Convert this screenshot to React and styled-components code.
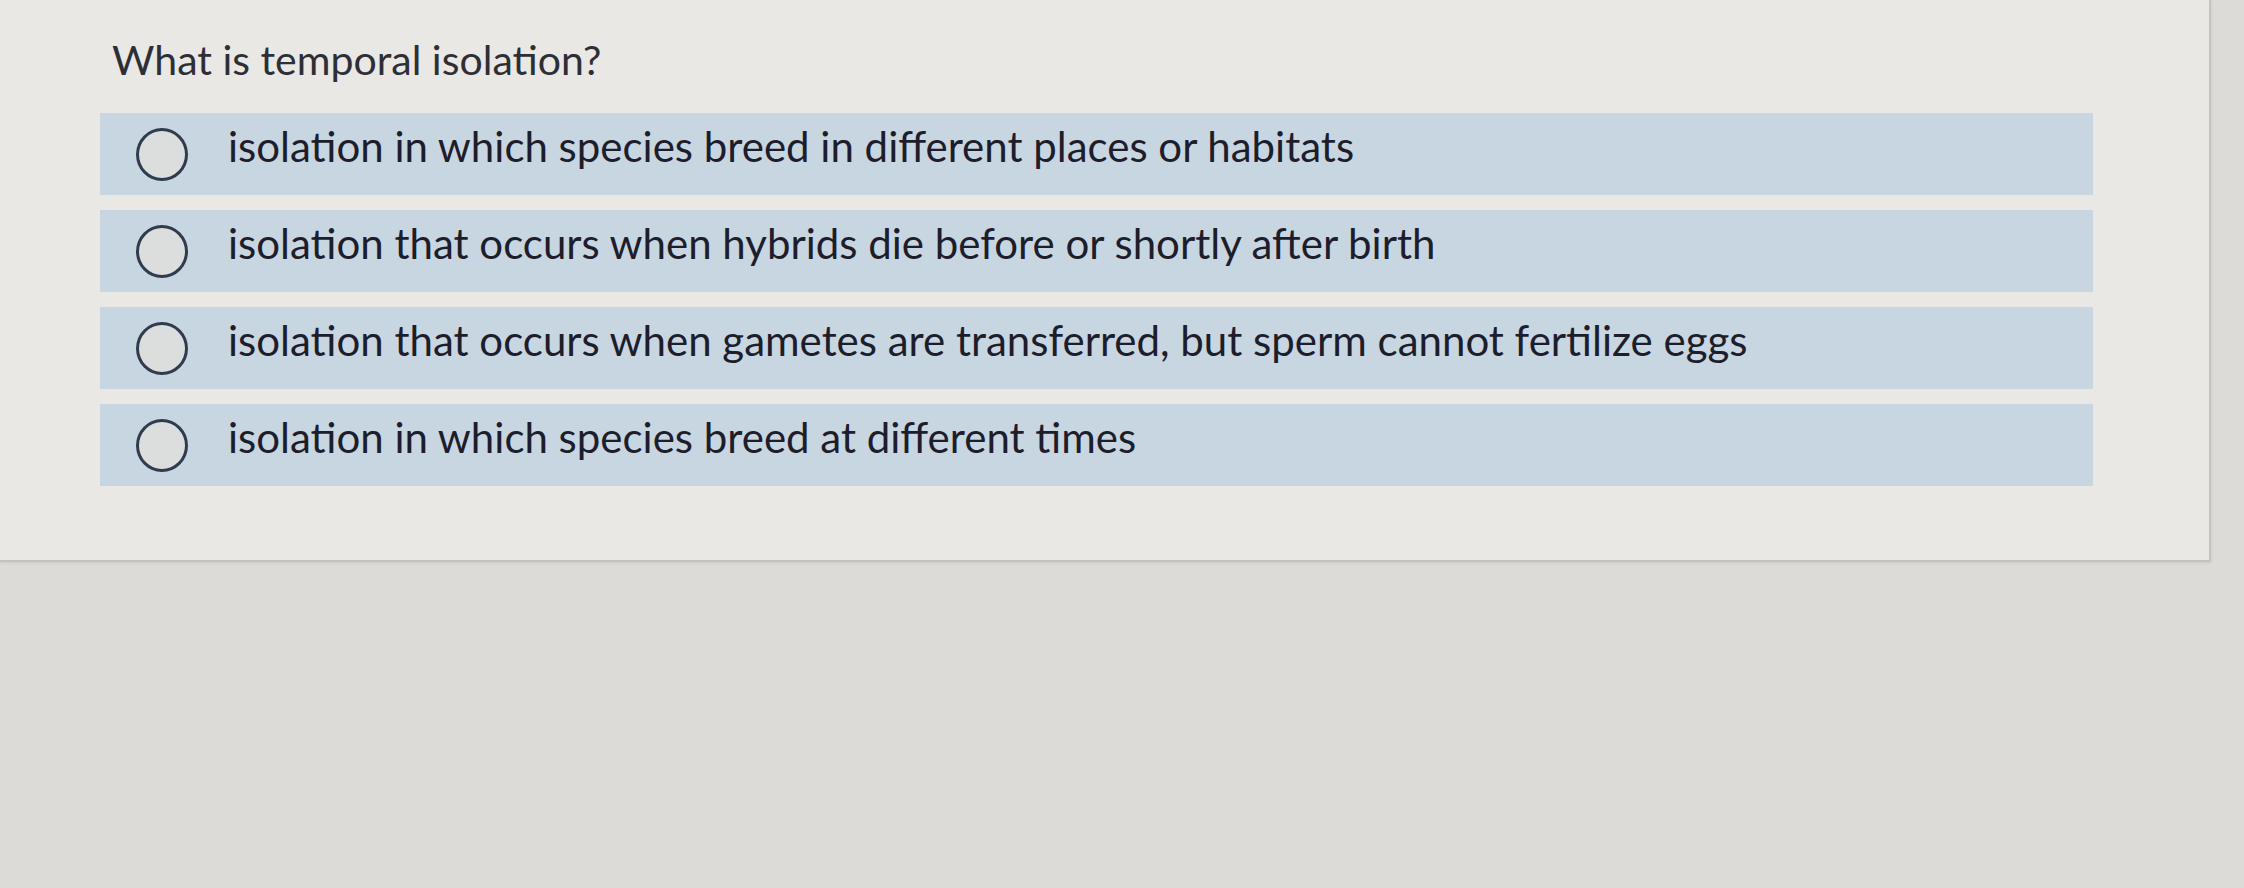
import React from 'react';
import styled, { createGlobalStyle } from 'styled-components';

const GlobalStyle = createGlobalStyle`
  html, body {
    margin: 0;
    padding: 0;
    background: #dddbd7;
  }
  body {
    font-family: Lato, "Open Sans", "Liberation Sans", sans-serif;
  }
`;

const choices = [
  'isolation in which species breed in different places or habitats',
  'isolation that occurs when hybrids die before or shortly after birth',
  'isolation that occurs when gametes are transferred, but sperm cannot fertilize eggs',
  'isolation in which species breed at different times',
];

const App = () => {
  return (
    <>
      <GlobalStyle />
      <Page>
        <QuestionCard>
          <Question>What is temporal isolation?</Question>
          <ChoiceList>
            {choices.map((text) => (
              <Choice key={text}>
                <Radio type="radio" name="temporal" />
                <ChoiceText>{text}</ChoiceText>
              </Choice>
            ))}
          </ChoiceList>
        </QuestionCard>
      </Page>
    </>
  );
};

const Page = styled.div`
  min-height: 888px;
  background: #dddbd7;
`;

const QuestionCard = styled.div`
  width: 2211px;
  box-sizing: border-box;
  padding: 35px 116px 74px 100px;
  background: #e9e8e4;
  border-right: 2px solid #c4c3bf;
  border-bottom: 2px solid #c4c3bf;
  box-shadow: 0 1px 3px rgba(0, 0, 0, 0.08);
`;

const Question = styled.h2`
  margin: 0 0 28px 12px;
  font-size: 41px;
  line-height: 50px;
  font-weight: 400;
  color: #2e2e36;
`;

const ChoiceList = styled.div`
  display: flex;
  flex-direction: column;
  gap: 15px;
`;

const Choice = styled.label`
  display: flex;
  align-items: center;
  height: 82px;
  padding-left: 36px;
  background: #c8d6e2;
  cursor: pointer;
`;

const Radio = styled.input`
  appearance: none;
  margin: 0;
  width: 52px;
  height: 53px;
  box-sizing: border-box;
  border: 3px solid #2f3c4d;
  border-radius: 50%;
  background: #dcdedd;
  flex-shrink: 0;
`;

const ChoiceText = styled.span`
  margin: 0 0 16px 40px;
  font-size: 42px;
  color: #1d1d2b;
`;

export default App;
